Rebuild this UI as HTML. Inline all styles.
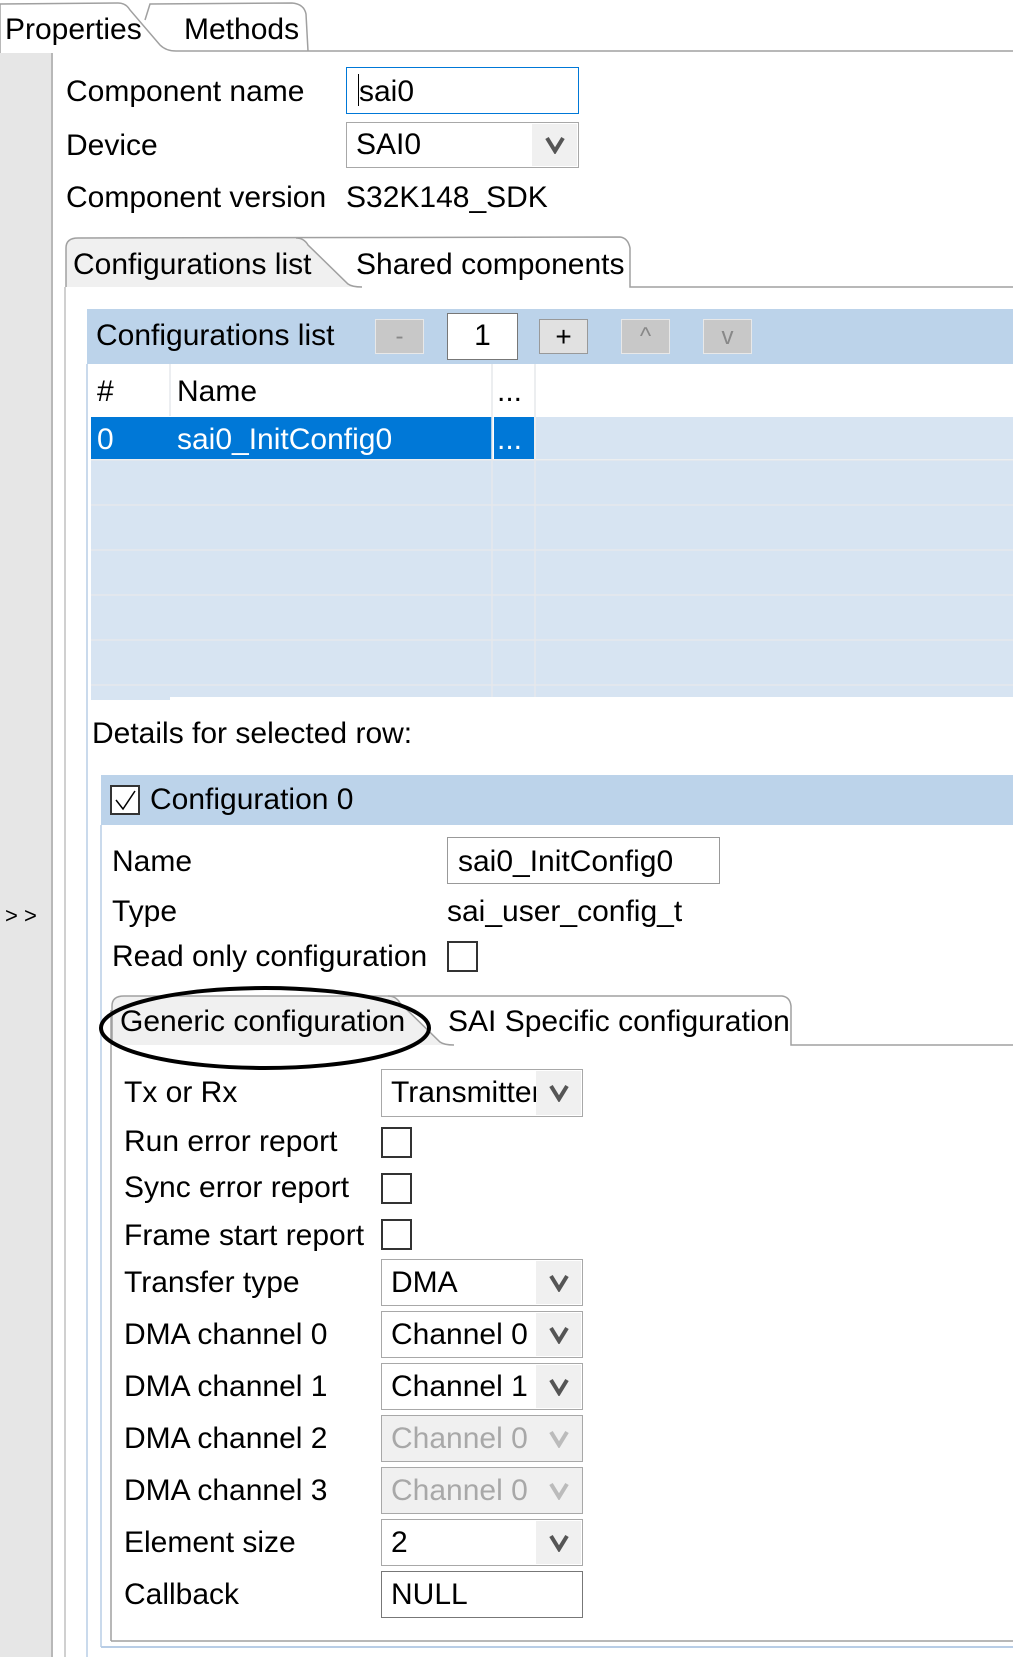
<!DOCTYPE html>
<html><head><meta charset="utf-8"><style>
*{margin:0;padding:0;box-sizing:border-box}
body{width:1013px;height:1657px;position:relative;overflow:hidden;background:#fff;font-family:"Liberation Sans",sans-serif;font-size:30px;color:#000}
.a{position:absolute}
.t{position:absolute;line-height:34px;white-space:nowrap}
.cb{position:absolute;width:31px;height:31px;border:2px solid #333;background:#fff}
.combo{position:absolute;left:381px;width:202px;height:47px;border:1px solid #a8a8a8;background:#fff;overflow:hidden}
.combo span{position:absolute;left:9px;top:6px;line-height:34px}
.combo i{position:absolute;right:1px;top:1px;bottom:1px;width:45px;background:#f0f0f0}
.combo svg{position:absolute;right:13px;top:14px}
.dis{background:#f0f0f0}
.dis span{color:#a8a8a8}
.btn{position:absolute;top:319px;width:49px;height:35px;background:#c8c8c8;border:1px solid #e8e8e8;text-align:center;line-height:33px;color:#888;font-size:24px}
</style></head><body>
<svg class="a" style="left:0;top:0" width="1013" height="1657">
<path d="M0,53 L0,4 L118,3 Q126,3 130,10 L160,45 Q166,51 176,51 L1013,51" fill="#fff" stroke="#a0a0a0" stroke-width="1.5"/>
<path d="M145,20 L150,4 L292,3 Q304,4 306,14 L308,51" fill="none" stroke="#a0a0a0" stroke-width="1.5"/>
<rect x="0" y="53" width="51" height="1604" fill="#e6e6e6"/>
<line x1="52" y1="53" x2="52" y2="1657" stroke="#a0a0a0" stroke-width="1.5"/>
<line x1="65" y1="287" x2="65" y2="1657" stroke="#c0c0c0" stroke-width="1.5"/>
<line x1="87" y1="364" x2="87" y2="1657" stroke="#b8cde6" stroke-width="1.5"/>
<path d="M66,287 L66,248 Q66,238 78,238 L296,238 Q304,238 308,245 L348,284 Q352,287 362,287 Z" fill="#f0f0f0"/>
<path d="M66,287 L66,248 Q66,238 78,238 L620,237 Q628,238 630,248 L630,287 L1013,287" fill="none" stroke="#a0a0a0" stroke-width="1.5"/>
<path d="M296,238 Q304,238 308,245 L348,284 Q352,287 362,287" fill="none" stroke="#a0a0a0" stroke-width="1.5"/>
<rect x="87" y="309" width="926" height="55" fill="#bcd3ea"/>
<rect x="91" y="417" width="401" height="42" fill="#0078d7"/>
<rect x="494" y="417" width="40" height="42" fill="#0078d7"/>
<rect x="536" y="417" width="477" height="42" fill="#d7e4f2"/>
<rect x="91" y="460" width="922" height="240" fill="#d7e4f2"/>
<g stroke="#e6e8ec" stroke-width="1.5">
<line x1="91" y1="505" x2="1013" y2="505"/><line x1="91" y1="550" x2="1013" y2="550"/>
<line x1="91" y1="595" x2="1013" y2="595"/><line x1="91" y1="640" x2="1013" y2="640"/>
<line x1="91" y1="685" x2="1013" y2="685"/><line x1="91" y1="460" x2="1013" y2="460"/>
<line x1="170" y1="364" x2="170" y2="416"/>
<line x1="492" y1="364" x2="492" y2="700"/><line x1="535" y1="364" x2="535" y2="700"/>
</g>
<rect x="170" y="697" width="843" height="4" fill="#fff"/>
<rect x="101" y="775" width="912" height="50" fill="#bcd3ea"/>
<line x1="101" y1="825" x2="101" y2="1647" stroke="#b8cde6" stroke-width="1.5"/>
<line x1="101" y1="1647" x2="1013" y2="1647" stroke="#b8cde6" stroke-width="2"/>
<line x1="111" y1="1010" x2="111" y2="1641" stroke="#a0a0a0" stroke-width="1.5"/>
<line x1="111" y1="1641" x2="1013" y2="1641" stroke="#a0a0a0" stroke-width="1.5"/>
<path d="M112,1045 L112,1006 Q112,996 124,996 L388,996 Q396,996 400,1003 L440,1042 Q444,1045 454,1045 Z" fill="#f0f0f0"/>
<path d="M112,1045 L112,1006 Q112,996 124,996 L782,996 Q790,997 791,1006 L791,1045 L1013,1045" fill="none" stroke="#a0a0a0" stroke-width="1.5"/>
<path d="M388,996 Q396,996 400,1003 L440,1042 Q444,1045 454,1045" fill="none" stroke="#a0a0a0" stroke-width="1.5"/>
<ellipse cx="265" cy="1028" rx="164" ry="40" fill="none" stroke="#000" stroke-width="4"/>
</svg>

<div class="t" style="left:5px;top:13px">Properties</div>
<div class="t" style="left:184px;top:13px">Methods</div>
<div class="t" style="left:5px;top:899px;font-size:22px">&gt; &gt;</div>

<div class="t" style="left:66px;top:75px">Component name</div>
<div class="a" style="left:346px;top:67px;width:233px;height:47px;border:1.5px solid #0078d7"></div>
<div class="a" style="left:358px;top:74px;width:1px;height:32px;background:#000"></div>
<div class="t" style="left:359px;top:75px">sai0</div>
<div class="t" style="left:66px;top:129px">Device</div>
<div class="combo" style="left:346px;top:122px;width:233px;height:46px"><span style="left:9px;top:5px">SAI0</span><i></i><svg width="20" height="18" viewBox="0 0 20 18" style="top:13px"><path d="M2,2 L10,15 L18,2" fill="none" stroke="#555" stroke-width="4"/></svg></div>
<div class="t" style="left:66px;top:181px">Component version</div>
<div class="t" style="left:346px;top:181px">S32K148_SDK</div>

<div class="t" style="left:73px;top:248px">Configurations list</div>
<div class="t" style="left:356px;top:248px">Shared components</div>

<div class="t" style="left:96px;top:319px">Configurations list</div>
<div class="btn" style="left:375px">-</div>
<div class="a" style="left:447px;top:313px;width:71px;height:47px;background:#fff;border:1.5px solid #777;text-align:center;line-height:44px">1</div>
<div class="btn" style="left:539px;background:#e1e1e1;border-color:#999;color:#000;font-size:28px">+</div>
<div class="btn" style="left:621px">^</div>
<div class="btn" style="left:703px">v</div>

<div class="t" style="left:97px;top:375px">#</div>
<div class="t" style="left:177px;top:375px">Name</div>
<div class="t" style="left:497px;top:375px">...</div>
<div class="t" style="left:97px;top:423px;color:#fff">0</div>
<div class="t" style="left:177px;top:423px;color:#fff">sai0_InitConfig0</div>
<div class="t" style="left:497px;top:423px;color:#fff">...</div>

<div class="t" style="left:92px;top:717px">Details for selected row:</div>

<div class="cb" style="left:110px;top:785px;width:30px;height:30px"></div>
<svg class="a" style="left:113px;top:789px" width="26" height="24"><path d="M3,11 L10,20 L22,2" fill="none" stroke="#000" stroke-width="1.5"/></svg>
<div class="t" style="left:150px;top:783px">Configuration 0</div>

<div class="t" style="left:112px;top:845px">Name</div>
<div class="a" style="left:447px;top:837px;width:273px;height:47px;border:1.5px solid #999"></div>
<div class="t" style="left:458px;top:845px">sai0_InitConfig0</div>
<div class="t" style="left:112px;top:895px">Type</div>
<div class="t" style="left:447px;top:895px">sai_user_config_t</div>
<div class="t" style="left:112px;top:940px">Read only configuration</div>
<div class="cb" style="left:447px;top:941px"></div>

<div class="t" style="left:120px;top:1005px">Generic configuration</div>
<div class="t" style="left:448px;top:1005px">SAI Specific configuration</div>

<div class="t" style="left:124px;top:1076px">Tx or Rx</div>
<div class="combo" style="top:1069px;height:48px"><span>Transmitter</span><i></i><svg width="20" height="18" viewBox="0 0 20 18"><path d="M2,2 L10,15 L18,2" fill="none" stroke="#555" stroke-width="4"/></svg></div>
<div class="t" style="left:124px;top:1125px">Run error report</div>
<div class="cb" style="left:381px;top:1127px"></div>
<div class="t" style="left:124px;top:1171px">Sync error report</div>
<div class="cb" style="left:381px;top:1173px"></div>
<div class="t" style="left:124px;top:1219px">Frame start report</div>
<div class="cb" style="left:381px;top:1219px"></div>

<div class="t" style="left:124px;top:1266px">Transfer type</div>
<div class="combo" style="top:1259px"><span>DMA</span><i></i><svg width="20" height="18" viewBox="0 0 20 18"><path d="M2,2 L10,15 L18,2" fill="none" stroke="#555" stroke-width="4"/></svg></div>
<div class="t" style="left:124px;top:1318px">DMA channel 0</div>
<div class="combo" style="top:1311px"><span>Channel 0</span><i></i><svg width="20" height="18" viewBox="0 0 20 18"><path d="M2,2 L10,15 L18,2" fill="none" stroke="#555" stroke-width="4"/></svg></div>
<div class="t" style="left:124px;top:1370px">DMA channel 1</div>
<div class="combo" style="top:1363px"><span>Channel 1</span><i></i><svg width="20" height="18" viewBox="0 0 20 18"><path d="M2,2 L10,15 L18,2" fill="none" stroke="#555" stroke-width="4"/></svg></div>
<div class="t" style="left:124px;top:1422px">DMA channel 2</div>
<div class="combo dis" style="top:1415px"><span>Channel 0</span><i></i><svg width="20" height="18" viewBox="0 0 20 18"><path d="M2,2 L10,15 L18,2" fill="none" stroke="#bbb" stroke-width="4"/></svg></div>
<div class="t" style="left:124px;top:1474px">DMA channel 3</div>
<div class="combo dis" style="top:1467px"><span>Channel 0</span><i></i><svg width="20" height="18" viewBox="0 0 20 18"><path d="M2,2 L10,15 L18,2" fill="none" stroke="#bbb" stroke-width="4"/></svg></div>
<div class="t" style="left:124px;top:1526px">Element size</div>
<div class="combo" style="top:1519px"><span>2</span><i></i><svg width="20" height="18" viewBox="0 0 20 18"><path d="M2,2 L10,15 L18,2" fill="none" stroke="#555" stroke-width="4"/></svg></div>
<div class="t" style="left:124px;top:1578px">Callback</div>
<div class="combo" style="top:1571px;border-color:#777"><span>NULL</span></div>
</body></html>
